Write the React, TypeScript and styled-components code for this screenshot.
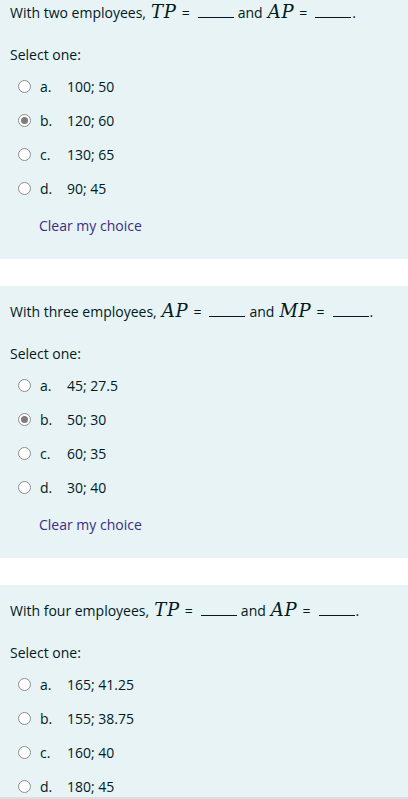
import React from "react";
import styled, { createGlobalStyle } from "styled-components";

const Global = createGlobalStyle`
  html, body { margin: 0; padding: 0; background: #ffffff; }
  body { overflow: hidden; }
  #root { width: 408px; height: 799px; overflow: hidden; }
`;

const Page = styled.div`
  display: flex;
  flex-direction: column;
  gap: 27px;
  margin-top: -13px;
  font-family: "Open Sans", "Noto Sans", sans-serif;
  font-size: 14px;
  color: #001a1e;
`;

const Panel = styled.div`
  background: #e7f3f5;
  padding: 14px 10px 22px 10px;
  display: flex;
  flex-direction: column;
`;

const Question = styled.div`
  height: 22px;
  line-height: 22px;
  white-space: nowrap;
  display: flex;
  align-items: baseline;
`;

const Math = styled.span`
  font-family: "DejaVu Serif", "Liberation Serif", serif;
  font-style: italic;
  font-size: 18px;
  margin: 0 5px 0 5px;
  letter-spacing: 0.8px;
`;

const Blank = styled.span<{ $end?: boolean }>`
  display: inline-block;
  width: 36px;
  border-bottom: 1px solid #001a1e;
  height: 12px;
  margin: 0 ${(p) => (p.$end ? "1px" : "4px")} 0 8px;
`;

const SelectOne = styled.div`
  margin-top: 21px;
  height: 22px;
  line-height: 22px;
`;

const Options = styled.div`
  margin-top: 3px;
  display: flex;
  flex-direction: column;
`;

const Option = styled.div`
  height: 34px;
  display: flex;
  align-items: center;
  padding-left: 8px;
`;

const Radio = styled.span<{ $checked?: boolean }>`
  width: 13px;
  height: 13px;
  box-sizing: border-box;
  border-radius: 50%;
  border: 1px solid #8d8d8d;
  background: #ffffff;
  position: relative;
  flex: none;
  &::after {
    content: "";
    display: ${(p) => (p.$checked ? "block" : "none")};
    position: absolute;
    left: 2px;
    top: 2px;
    width: 7px;
    height: 7px;
    border-radius: 50%;
    background: #7d7d7d;
  }
`;

const Letter = styled.span`
  margin-left: 9px;
  width: 27px;
`;

const Value = styled.span``;

const Clear = styled.div`
  margin-top: 10px;
  padding-left: 29px;
  height: 22px;
  line-height: 22px;
  color: #3d2c86;
`;

const BottomEdge = styled.div`
  position: fixed;
  left: 0;
  right: 0;
  bottom: 0;
  height: 2px;
  background: #dcdfe0;
`;

type Q = {
  pre: string;
  m1: string;
  m2: string;
  opts: string[];
  checked: number;
  clear: boolean;
};

const questions: Q[] = [
  { pre: "With two employees,", m1: "TP", m2: "AP", opts: ["100; 50", "120; 60", "130; 65", "90; 45"], checked: 1, clear: true },
  { pre: "With three employees,", m1: "AP", m2: "MP", opts: ["45; 27.5", "50; 30", "60; 35", "30; 40"], checked: 1, clear: true },
  { pre: "With four employees,", m1: "TP", m2: "AP", opts: ["165; 41.25", "155; 38.75", "160; 40", "180; 45"], checked: -1, clear: false },
];

const letters = ["a.", "b.", "c.", "d."];

export default function App() {
  return (
    <>
      <Global />
      <Page>
        {questions.map((q, qi) => (
          <Panel key={qi}>
            <Question>
              <span>{q.pre}</span>
              <Math>{q.m1}</Math>
              <span>=</span>
              <Blank />
              <span>and</span>
              <Math>{q.m2}</Math>
              <span>=</span>
              <Blank $end />
              <span>.</span>
            </Question>
            <SelectOne>Select one:</SelectOne>
            <Options>
              {q.opts.map((o, oi) => (
                <Option key={oi}>
                  <Radio $checked={oi === q.checked} />
                  <Letter>{letters[oi]}</Letter>
                  <Value>{o}</Value>
                </Option>
              ))}
            </Options>
            {q.clear && <Clear>Clear my choice</Clear>}
          </Panel>
        ))}
      </Page>
      <BottomEdge />
    </>
  );
}
